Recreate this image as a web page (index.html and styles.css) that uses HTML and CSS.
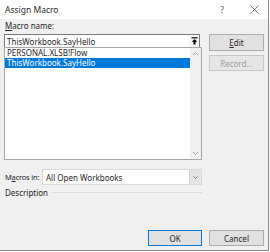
FILE: index.html
```html
<!DOCTYPE html>
<html lang="en">
<head>
    <meta charset="UTF-8">
    <meta name="viewport" content="width=device-width, initial-scale=1.0">
    <title>Assign Macro</title>
    <link rel="stylesheet" href="styles.css">
</head>
<body>
    <div class="dialog">
        <header class="titlebar">
            <span class="title">Assign Macro</span>
            <span class="help">?</span>
            <svg class="close" width="9" height="9" viewBox="0 0 9 9">
                <path d="M0.5 0.5 L8.5 8.5 M8.5 0.5 L0.5 8.5" stroke="#555" stroke-width="0.8" fill="none"/>
            </svg>
        </header>

        <div class="main">
            <div class="left">
                <div class="label"><u>M</u>acro name:</div>
                <div class="name-box">
                    <span class="name-text">ThisWorkbook.SayHello</span>
                    <span class="collapse-btn">
                        <svg width="7" height="8" viewBox="0 0 7 8">
                            <path d="M0.5 0.8 H6.5" stroke="#000" stroke-width="1.2"/>
                            <path d="M3.5 2 L0.8 4.8 H2.5 V7.5 H4.5 V4.8 H6.2 Z" fill="#000"/>
                        </svg>
                    </span>
                </div>
                <div class="listbox">
                    <ul class="items">
                        <li>PERSONAL.XLSB!Flow</li>
                        <li class="selected">ThisWorkbook.SayHello</li>
                    </ul>
                    <div class="scrollbar">
                        <svg width="7" height="5" viewBox="0 0 7 5"><path d="M1 4 L3.5 1.5 L6 4" stroke="#a6a6a6" fill="none"/></svg>
                        <svg width="7" height="5" viewBox="0 0 7 5"><path d="M1 1 L3.5 3.5 L6 1" stroke="#a6a6a6" fill="none"/></svg>
                    </div>
                </div>

                <div class="macros-in">
                    <span class="label">M<u>a</u>cros in:</span>
                    <div class="combo">
                        <span class="combo-text">All Open Workbooks</span>
                        <span class="combo-btn">
                            <svg width="7" height="5" viewBox="0 0 7 5"><path d="M1.5 1.5 L3.5 3.5 L5.5 1.5" stroke="#777" fill="none"/></svg>
                        </span>
                    </div>
                </div>

                <div class="description">
                    <span class="label">Description</span>
                    <span class="rule"></span>
                </div>
            </div>

            <div class="right">
                <button class="btn edit"><u>E</u>dit</button>
                <button class="btn record" disabled>Record...</button>
            </div>
        </div>

        <footer class="footer">
            <button class="btn ok">OK</button>
            <button class="btn cancel">Cancel</button>
        </footer>
    </div>
</body>
</html>
```

FILE: styles.css
```css
body {
    margin: 0;
    background: #fff;
    font-family: "Noto Sans", "Open Sans", sans-serif;
    font-size: 8px;
    color: #262626;
}

.dialog {
    width: 268px;
    height: 250px;
    background: #f0f0f0;
    border-right: 1px solid #8a8a8a;
    border-bottom: 1px solid #8a8a8a;
    display: flex;
    flex-direction: column;
}

.titlebar {
    height: 19px;
    background: #fff;
    display: flex;
    align-items: center;
    padding: 0 9px 0 5px;
}
.titlebar .title {
    flex: 1;
    font-size: 8.5px;
    color: #2a2a2a;
}
.titlebar .help {
    font-size: 8.5px;
    color: #555;
    margin-right: 26px;
}

.main {
    display: flex;
    padding-left: 4px;
    gap: 7px;
}

.left {
    width: 198px;
}

.label {
    white-space: nowrap;
}

.left > .label {
    line-height: 11px;
    padding: 1px 0 0 1px;
    margin-bottom: 3px;
}

.name-box {
    height: 14px;
    box-sizing: border-box;
    border: 1px solid #7a7a7a;
    background: #fff;
    display: flex;
    align-items: center;
    width: 196px;
}
.name-text {
    flex: 1;
    padding-left: 2px;
}
.collapse-btn {
    width: 10px;
    height: 12px;
    display: flex;
    align-items: center;
    justify-content: center;
    background: #f5f5f5;
}

.listbox {
    margin-top: -1px;
    height: 113px;
    box-sizing: border-box;
    border: 1px solid #a8a8a8;
    background: #fff;
    display: flex;
}
.items {
    list-style: none;
    margin: 0;
    padding: 0;
    flex: 1;
}
.items li {
    height: 10px;
    line-height: 10px;
    padding-left: 2px;
}
.items li.selected {
    background: #0078d7;
    color: #fff;
}
.scrollbar {
    width: 11px;
    background: #f0f0f0;
    display: flex;
    flex-direction: column;
    justify-content: space-between;
    align-items: center;
    padding: 3px 0;
}

.macros-in {
    display: flex;
    align-items: center;
    margin-top: 9px;
    height: 16px;
}
.macros-in .label {
    flex: 0 0 37px;
    padding-left: 1px;
    font-size: 7.5px;
    letter-spacing: -0.2px;
}
.combo {
    flex: 1;
    height: 16px;
    box-sizing: border-box;
    border: 1px solid #d9d9d9;
    background: #fff;
    display: flex;
    align-items: center;
}
.combo-text {
    flex: 1;
    padding-left: 3px;
}
.combo-btn {
    width: 11px;
    height: 14px;
    background: #e5e5e5;
    border-left: 1px solid #d0d0d0;
    display: flex;
    align-items: center;
    justify-content: center;
}

.description {
    display: flex;
    align-items: center;
    height: 12px;
    margin-top: 1px;
}
.description .label {
    padding-left: 1px;
    margin-right: 3px;
}
.description .rule {
    flex: 1;
    height: 1px;
    background: #dcdcdc;
}

.right {
    display: flex;
    flex-direction: column;
    padding-top: 15px;
    gap: 4px;
}

.btn {
    font-family: inherit;
    font-size: 8px;
    color: #262626;
    background: #e1e1e1;
    border: 1px solid #adadad;
    padding: 0;
    margin: 0;
    width: 55px;
    height: 16px;
}
.btn.edit {
    height: 17px;
}
.btn.record {
    color: #a0a0a0;
    background: #e6e6e6;
    border-color: #c8c8c8;
}
.btn.ok {
    border-color: #0078d7;
    width: 54px;
}

.footer {
    margin-top: auto;
    display: flex;
    justify-content: flex-end;
    gap: 7px;
    padding: 0 4px 4px 0;
}
```
